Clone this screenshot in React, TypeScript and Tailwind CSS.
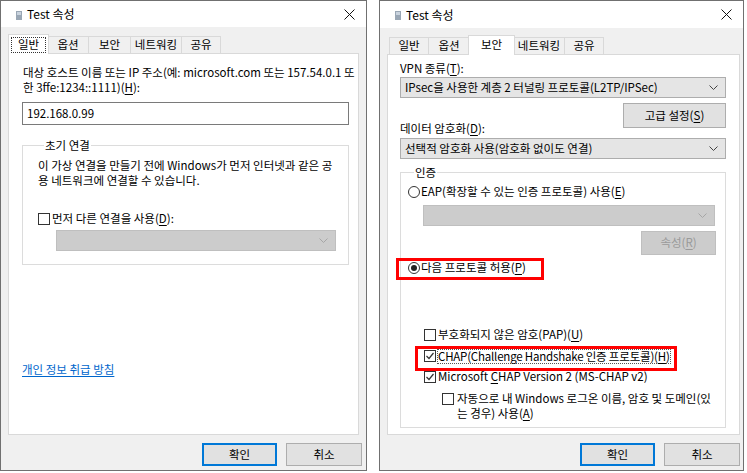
import React from "react";

const FONT = { fontFamily: "'Noto Sans CJK KR', 'Noto Sans', sans-serif" };

function Chevron({ light }: { light?: boolean }) {
  return (
    <svg width="9" height="5" viewBox="0 0 9 5" className="shrink-0">
      <path d="M0.5 0.5 L4.5 4.5 L8.5 0.5" fill="none" stroke={light ? "#a6a6a6" : "#444"} strokeWidth="1" />
    </svg>
  );
}

function Combo({ text, disabled, className }: { text?: string; disabled?: boolean; className: string }) {
  return (
    <div
      className={`flex h-[21px] items-center justify-between border pl-[4px] pr-[7px] ${
        disabled ? "border-[#bfbfbf] bg-[#cccccc]" : "border-[#adadad] bg-[#e5e5e5]"
      } ${className}`}
    >
      <span className="truncate">{text}</span>
      <Chevron light={disabled} />
    </div>
  );
}

function Check({ checked }: { checked?: boolean }) {
  return (
    <span className="flex h-[12px] w-[12px] shrink-0 items-center justify-center border border-[#333] bg-white">
      {checked && (
        <svg width="10" height="10" viewBox="0 0 10 10">
          <path d="M1.5 5 L4 7.5 L8.5 2" fill="none" stroke="#333" strokeWidth="1.2" />
        </svg>
      )}
    </span>
  );
}

function Radio({ checked }: { checked?: boolean }) {
  return (
    <span className="flex h-[12px] w-[12px] shrink-0 items-center justify-center rounded-full border border-[#333] bg-white">
      {checked && <span className="h-[6px] w-[6px] rounded-full bg-[#222]" />}
    </span>
  );
}

function Btn({ children, primary, disabled, className = "" }: { children: React.ReactNode; primary?: boolean; disabled?: boolean; className?: string }) {
  return (
    <div
      className={`flex items-center justify-center ${
        disabled
          ? "border border-[#bfbfbf] bg-[#cccccc] text-[#9a9a9a]"
          : primary
          ? "border-2 border-[#0078d7] bg-[#e1e1e1]"
          : "border border-[#adadad] bg-[#e1e1e1]"
      } ${className}`}
    >
      {children}
    </div>
  );
}

function U({ children }: { children: React.ReactNode }) {
  return <span className="underline underline-offset-2">{children}</span>;
}

const TAB_NAMES = ["일반", "옵션", "보안", "네트워킹", "공유"];
const TAB_W = ["w-[40px]", "w-[42px]", "w-[43px]", "w-[52px]", "w-[40px]"];

function Tabs({ active, focus }: { active: number; focus?: boolean }) {
  return (
    <div className="flex h-[19px] items-end pl-[2px]">
      {TAB_NAMES.map((n, i) => {
        const sel = i === active;
        return (
          <div
            key={n}
            className={`relative flex items-center justify-center border-t border-l border-r border-[#d9d9d9] ${TAB_W[i]} ${
              sel ? "z-10 -mx-[2px] -mb-px h-[20px] bg-white px-[2px]" : "h-[17px] bg-[#f0f0f0]"
            } ${i > 0 && !sel && i - 1 !== active ? "-ml-px" : ""}`}
            style={sel ? { width: i === 0 ? 41 : 47 } : undefined}
          >
            {sel && focus ? (
              <span className="flex h-[16px] w-full items-center justify-center border border-dotted border-[#333]">{n}</span>
            ) : (
              <span className={sel ? "-mt-[2px]" : ""}>{n}</span>
            )}
          </div>
        );
      })}
    </div>
  );
}

function TitleBar({ h }: { h: string }) {
  return (
    <div className={`flex ${h} shrink-0 items-center bg-white pl-[15px] pr-[11px]`}>
      <svg width="6" height="9" viewBox="0 0 6 9" className="mr-[5px] mt-[2px]">
        <rect x="0" y="0" width="6" height="9" fill="#9aa7b5" />
        <rect x="1" y="1" width="4" height="3" fill="#c9d3de" />
      </svg>
      <span className="text-[12px]">Test 속성</span>
      <svg width="11" height="11" viewBox="0 0 11 11" className="ml-auto">
        <path d="M0.5 0.5 L10.5 10.5 M10.5 0.5 L0.5 10.5" stroke="#111" strokeWidth="1" />
      </svg>
    </div>
  );
}

function LeftDialog() {
  return (
    <div className="flex h-[471px] w-[367px] shrink-0 flex-col border border-[#707070] bg-[#f0f0f0]">
      <TitleBar h="h-[26px]" />
      <div className="flex flex-col px-[7px] pt-[7px]">
        <Tabs active={0} focus />
        <div className="flex h-[382px] w-[351px] flex-col border border-[#d9d9d9] bg-white pl-[13px] pr-[9px]">
          <p className="mt-[11px] whitespace-nowrap pl-px leading-[15px]">
            대상 호스트 이름 또는 IP 주소(예: microsoft.com 또는 157.54.0.1 또<br />
            한 3ffe:1234::1111)(<U>H</U>):
          </p>
          <div className="mt-[7px] flex h-[23px] items-center border border-[#7a7a7a] px-[4px]">192.168.0.99</div>
          <fieldset className="mt-[13px] h-[127px] border border-[#dcdcdc] pl-[15px] pr-[6px]">
            <legend className="ml-[6px] px-[1px] leading-[14px]">초기 연결</legend>
            <p className="mt-[6px] whitespace-nowrap leading-[15px]">
              이 가상 연결을 만들기 전에 Windows가 먼저 인터넷과 같은 공<br />용 네트워크에 연결할 수 있습니다.
            </p>
            <label className="mt-[24px] flex h-[14px] items-center gap-[2px]">
              <Check />
              <span>
                먼저 다른 연결을 사용(<U>D</U>):
              </span>
            </label>
            <Combo disabled className="ml-[18px] mt-[4px] w-[280px]" />
          </fieldset>
          <a className="mt-[96px] self-start text-[#0066cc] underline underline-offset-2">개인 정보 취급 방침</a>
        </div>
        <div className="mt-[8px] flex justify-end gap-[9px]" style={{ marginRight: -3 }}>
          <Btn primary className="h-[23px] w-[75px]">확인</Btn>
          <Btn className="h-[23px] w-[76px]">취소</Btn>
        </div>
      </div>
    </div>
  );
}

function RightDialog() {
  return (
    <div className="relative flex h-[471px] w-[365px] shrink-0 flex-col border border-[#707070] bg-[#f0f0f0]">
      <TitleBar h="h-[27px]" />
      <div className="flex flex-col pl-[7px] pt-[7px]">
        <Tabs active={2} />
        <div className="flex h-[381px] w-[353px] flex-col border border-[#d9d9d9] bg-white pl-[12px]">
          <p className="mt-[6px] leading-[14px]">
            VPN 종류(<U>T</U>):
          </p>
          <Combo text="IPsec을 사용한 계층 2 터널링 프로토콜(L2TP/IPSec)" className="mt-[2px] w-[326px]" />
          <div className="flex w-[326px] items-start justify-between">
            <p className="mt-[23px] leading-[14px]">
              데이터 암호화(<U>D</U>):
            </p>
            <Btn className="mt-[5px] h-[25px] w-[103px]">
              고급 설정(<U>S</U>)
            </Btn>
          </div>
          <Combo text="선택적 암호화 사용(암호화 없이도 연결)" className="mt-[3px] w-[326px]" />
          <fieldset className="mt-[6px] h-[263px] w-[326px] border border-[#dcdcdc] pl-[7px]">
            <legend className="ml-[6px] px-[1px] leading-[14px]">인증</legend>
            <label className="mt-[6px] flex h-[14px] items-center gap-[1px]">
              <Radio />
              <span>
                EAP(확장할 수 있는 인증 프로토콜) 사용(<U>E</U>)
              </span>
            </label>
            <Combo disabled className="ml-[15px] mt-[6px] w-[292px]" />
            <div className="flex pr-[9px]">
              <Btn disabled className="ml-auto mt-[5px] h-[24px] w-[75px]">
                속성(<U>R</U>)
              </Btn>
            </div>
            <label className="mt-[6px] flex h-[14px] items-center gap-[1px]">
              <Radio checked />
              <span>
                다음 프로토콜 허용(<U>P</U>)
              </span>
            </label>
            <label className="ml-[16px] mt-[53px] flex h-[14px] items-center gap-[2px]">
              <Check />
              <span>
                부호화되지 않은 암호(PAP)(<U>U</U>)
              </span>
            </label>
            <label className="ml-[16px] mt-[7px] flex h-[14px] items-center gap-[1px]">
              <Check checked />
              <span className="border border-dotted border-[#555] leading-[13px] tracking-[-0.2px]">
                CHAP(Challenge Handshake 인증 프로토콜)(<U>H</U>)
              </span>
            </label>
            <label className="ml-[16px] mt-[7px] flex h-[14px] items-center gap-[2px]">
              <Check checked />
              <span>
                Microsoft <U>C</U>HAP Version 2 (MS-CHAP v2)
              </span>
            </label>
            <label className="ml-[34px] mt-[7px] flex items-start gap-[3px]">
              <span className="mt-[2px]">
                <Check />
              </span>
              <span className="whitespace-nowrap leading-[15px]">
                자동으로 내 Windows 로그온 이름, 암호 및 도메인(있<br />는 경우) 사용(<U>A</U>)
              </span>
            </label>
          </fieldset>
        </div>
        <div className="mt-[8px] flex w-[353px] justify-end gap-[9px]">
          <Btn primary className="h-[23px] w-[75px]">확인</Btn>
          <Btn className="h-[23px] w-[76px]">취소</Btn>
        </div>
      </div>
      {/* annotation boxes */}
      <div className="absolute left-[16px] top-[257px] h-[22px] w-[148px] border-[3px] border-[#ff0000]" />
      <div className="absolute left-[35px] top-[345px] h-[25px] w-[262px] border-[3px] border-[#ff0000]" />
    </div>
  );
}

export default function App() {
  return (
    <div className="flex h-[473px] w-[747px] gap-[12px] bg-white text-[11.5px] text-black" style={FONT}>
      <LeftDialog />
      <RightDialog />
    </div>
  );
}
